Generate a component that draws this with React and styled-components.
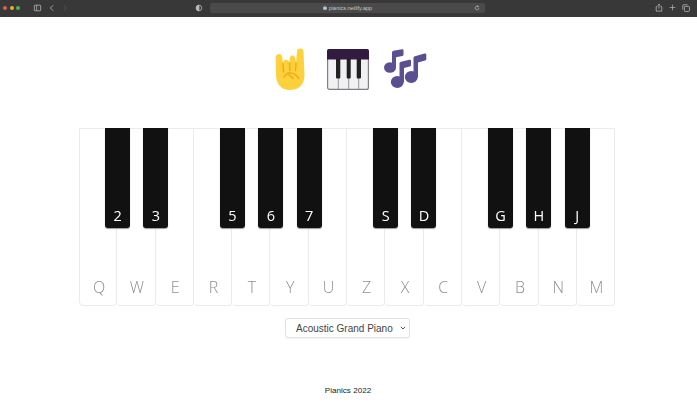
import React from 'react'
import styled, { createGlobalStyle } from 'styled-components'

const GlobalStyle = createGlobalStyle`
  html, body { margin: 0; padding: 0; background: #fff; }
  body { font-family: "Liberation Sans", Arial, sans-serif; width: 697px; height: 403px; overflow: hidden; }
`

const Page = styled.div`
  display: flex;
  flex-direction: column;
  align-items: center;
  width: 697px;
  height: 403px;
`

const BrowserBar = styled.div`
  width: 100%;
  height: 17px;
  flex: none;
  box-sizing: border-box;
  background: #383838;
  display: grid;
  grid-template-columns: 1fr 275px 1fr;
  align-items: center;
  gap: 6px;
  padding: 0 7px 2px 3px;
  color: #b8b8b8;
`

const BarSide = styled.div`
  display: flex;
  align-items: center;
  gap: ${(p) => p.$gap || 0}px;
  justify-content: ${(p) => p.$end ? 'flex-end' : 'flex-start'};
`

const Dot = styled.span`
  width: 4px;
  height: 4px;
  border-radius: 50%;
  margin-right: 2.5px;
  background: ${(p) => p.$color};
`

const AddressBar = styled.div`
  height: 10px;
  border-radius: 2px;
  background: #4a4a4a;
  display: flex;
  align-items: center;
  justify-content: center;
  gap: 2px;
  position: relative;
  left: 1px;
  font-size: 5.5px;
  color: #c9c9c9;
`

const Reload = styled.span`
  position: absolute;
  right: 5px;
  top: 2px;
  display: flex;
`

const Emojis = styled.div`
  display: flex;
  align-items: center;
  margin-top: 30px;
  height: 44px;
  margin-left: 5px;
`

const Keyboard = styled.div`
  display: grid;
  grid-template-columns: repeat(14, 38.3px);
  margin-top: 37px;
  height: 178px;
  margin-left: -2.4px;
  will-change: transform;
`

const WhiteKey = styled.div`
  position: relative;
  box-sizing: border-box;
  height: 178px;
  border: 1px solid #ebebeb;
  border-left-width: ${(p) => p.$first ? 1 : 0}px;
  border-radius: 0 0 4px 4px;
  display: flex;
  align-items: flex-end;
  justify-content: center;
  padding: 0 0 7px 2px;
  font-family: "Open Sans", sans-serif;
  font-weight: 300;
  font-size: 16px;
  line-height: 22px;
  color: #8f8f8f;
`

const BlackKey = styled.div`
  position: absolute;
  z-index: 1;
  top: -1px;
  right: -13.8px;
  width: 25px;
  height: 100px;
  border-radius: 0 0 3px 3px;
  background: #111;
  box-shadow: 0 1px 1px #999;
  display: flex;
  align-items: flex-end;
  justify-content: center;
  padding-bottom: 2px;
  box-sizing: border-box;
  font-weight: 400;
  font-size: 14.5px;
  line-height: 20px;
  color: #fff;
`

const chevron = "data:image/svg+xml,%3Csvg xmlns='http://www.w3.org/2000/svg' width='6' height='4' viewBox='0 0 6 4'%3E%3Cpath d='M.8.8 3 3 5.200.8' fill='none' stroke='%23555' stroke-width='1'/%3E%3C/svg%3E"

const SoundSelect = styled.select`
  appearance: none;
  margin-top: 12px;
  margin-left: -2px;
  width: 125px;
  height: 20px;
  box-sizing: border-box;
  padding: 0 0 0 10px;
  background: #fff url("${chevron}") no-repeat right 3px center;
  border: 1px solid #e2e2e2;
  border-radius: 3px;
  box-shadow: 0 1px 1px rgba(0, 0, 0, 0.04);
  font-family: "Liberation Sans", Arial, sans-serif;
  font-size: 10px;
  color: #444;
`

const Footer = styled.footer`
  margin-top: 47px;
  margin-left: -1px;
  font-size: 8.1px;
  line-height: 12px;
  color: #222;
`

const whiteKeys = [
  ['Q', '2'], ['W', '3'], ['E'], ['R', '5'], ['T', '6'], ['Y', '7'], ['U'],
  ['Z', 'S'], ['X', 'D'], ['C'], ['V', 'G'], ['B', 'H'], ['N', 'J'], ['M'],
]

const RockHand = () => (
  <svg width="31" height="42" viewBox="0 0 31 42">
    <path d="M4 6C2 6 .8 7.500 .8 9.500L1 26C1 36 6 42 15 42s14.500-6 14.500-15L28.500 3C28.500 .2 22.500-.8 22 3L21 15c-.5-5-1-7.500-3.500-7.500C15 7.500 14.500 9.500 14.500 15 14 12.500 13 11.800 11 11.800 9 11.800 8 13 8 15.500L7.200 9.500C7 7.500 6 6 4 6z" fill="#fdd13c" />
    <path d="M8 15.500 8.500 24M14.500 15 15 22.500M21 15l-.5 7.500M9 29c2-3 4.500-4.500 7-4 3 .5 6 2.500 7.500 5.500M14 27c1.500 1 3 2 4 3.500" fill="none" stroke="#f4ab20" strokeWidth="1.600" strokeLinecap="round" />
  </svg>
)

const PianoEmoji = () => (
  <svg width="42" height="41" viewBox="0 0 42 41" style={{ marginLeft: 21 }}>
    <rect x=".6" y=".6" width="40.800" height="39.800" rx="2" fill="#f1f0f2" stroke="#807e84" strokeWidth="1.200" />
    <path d="M0 2a2 2 0 0 1 2-2h38a2 2 0 0 1 2 2v8.500H0z" fill="#321b41" />
    <path d="M11.300 29v11M21.700 29v11M31.700 29v11" stroke="#9a989c" strokeWidth="1" />
    <path d="M9 10h4.300v18.500a1 1 0 0 1-1 1H10a1 1 0 0 1-1-1zM19.700 10h4v18.500a1 1 0 0 1-1 1h-2a1 1 0 0 1-1-1zM29.700 10H34v18.500a1 1 0 0 1-1 1h-2.300a1 1 0 0 1-1-1z" fill="#212121" />
  </svg>
)

const Notes = () => (
  <svg width="43" height="40" viewBox="0 0 43 40" style={{ marginLeft: 15 }} fill="#5c4f91">
    <ellipse cx="6" cy="18.500" rx="6" ry="5.300" />
    <path d="M8 18.500V3.500C8 2.500 8.500 2 9.500 1.700L18 .2C19 0 19.500 .5 19.500 1.500V5.500c0 .8-.4 1.200-1.200 1.400L12 8.300v10.200z" />
    <ellipse cx="13.300" cy="33" rx="6.500" ry="6" />
    <path d="M15.500 33V14.500c0-1 .5-1.500 1.500-1.700l8.300-2c1-.2 1.700.3 1.700 1.300v4c0 .8-.4 1.200-1.200 1.400l-5.800 1.500V33z" />
    <ellipse cx="27.300" cy="28" rx="6.500" ry="6" />
    <path d="M29.500 28V9c0-1 .5-1.500 1.500-1.700l9.500-2.800c1-.2 1.800.3 1.800 1.300v4.200c0 .8-.4 1.200-1.200 1.400l-7.100 2V28z" />
  </svg>
)

const Icon = ({ children, w = 9, h = 9, ...rest }) => (
  <svg width={w} height={h} viewBox="0 0 10 10" fill="none" stroke="currentColor" strokeWidth="1" {...rest}>
    {children}
  </svg>
)

export default function App() {
  return (
    <>
      <GlobalStyle />
      <Page>
        <BrowserBar>
          <BarSide>
            <Dot $color="#e8575a" />
            <Dot $color="#e5b32f" />
            <Dot $color="#3fbb4a" />
            <Icon w={9} h={8} style={{ marginLeft: 10 }}>
              <rect x="1" y="1.500" width="8" height="7" rx="1" />
              <path d="M4 1.500v7" />
            </Icon>
            <Icon w={8} h={8} style={{ marginLeft: 6 }}><path d="M6.500 1.500 3 5l3.500 3.500" /></Icon>
            <Icon w={8} h={8} style={{ marginLeft: 5, opacity: 0.25 }}><path d="M3.500 1.500 7 5 3.500 8.500" /></Icon>
            <Icon w={8} h={8} style={{ marginLeft: 'auto' }}>
              <circle cx="5" cy="5" r="3.500" />
              <path d="M5 1.500a3.500 3.500 0 0 0 0 7z" fill="currentColor" />
            </Icon>
          </BarSide>
          <AddressBar>
            <Icon w={4} h={5}><rect x="1" y="4" width="8" height="6" fill="currentColor" /><path d="M3 4V2.500a2 2 0 0 1 4 0V4" /></Icon>
            pianics.netlify.app
            <Reload>
              <Icon w={6} h={6}><path d="M8 5a3 3 0 1 1-1.500-2.600M6 .5v2.500h2.500" /></Icon>
            </Reload>
          </AddressBar>
          <BarSide $end $gap={6}>
            <Icon w={8} h={9}><path d="M3 4H1.500v5.500h7V4H7M5 6.500V1M3.300 2.500 5 .8l1.700 1.700" /></Icon>
            <Icon w={7} h={7}><path d="M5 1v8M1 5h8" /></Icon>
            <Icon w={8} h={8}><rect x="3" y="3" width="6.300" height="6.300" rx="1" /><path d="M7 1H2a1 1 0 0 0-1 1v5" /></Icon>
          </BarSide>
        </BrowserBar>
        <Emojis>
          <RockHand />
          <PianoEmoji />
          <Notes />
        </Emojis>
        <Keyboard>
          {whiteKeys.map(([label, black], i) => (
            <WhiteKey key={label} $first={i === 0}>
              {label}
              {black && <BlackKey>{black}</BlackKey>}
            </WhiteKey>
          ))}
        </Keyboard>
        <SoundSelect defaultValue="Acoustic Grand Piano">
          <option>Acoustic Grand Piano</option>
          <option>Electric Piano</option>
          <option>Church Organ</option>
        </SoundSelect>
        <Footer>Pianics 2022</Footer>
      </Page>
    </>
  )
}
